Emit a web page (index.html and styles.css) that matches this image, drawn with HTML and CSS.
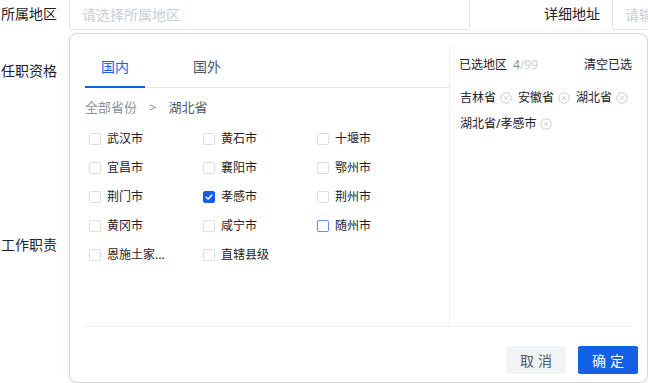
FILE: index.html
```html
<!DOCTYPE html>
<html lang="zh">
<head>
<meta charset="utf-8">
<link rel="stylesheet" href="styles.css">
</head>
<body>
<div class="page">
  <div class="form">
    <div class="row-top">
      <div class="lbl">所属地区</div>
      <div class="input wide"><span class="ph">请选择所属地区</span></div>
      <div class="lbl2">详细地址</div>
      <div class="input rest"><span class="ph">请输入详细地址</span></div>
    </div>
    <div class="lbl qual">任职资格</div>
    <div class="lbl duty">工作职责</div>
  </div>

  <div class="popup">
    <div class="pop-body">
      <div class="left">
        <div class="tabs">
          <div class="tab active">国内</div>
          <div class="tab">国外</div>
        </div>
        <div class="crumb"><span class="c-all">全部省份</span><span class="c-sep">&gt;</span><span class="c-cur">湖北省</span></div>
        <div class="grid">
          <label class="cb"><span class="box"></span><span class="txt">武汉市</span></label>
          <label class="cb"><span class="box"></span><span class="txt">黄石市</span></label>
          <label class="cb"><span class="box"></span><span class="txt">十堰市</span></label>
          <label class="cb"><span class="box"></span><span class="txt">宜昌市</span></label>
          <label class="cb"><span class="box"></span><span class="txt">襄阳市</span></label>
          <label class="cb"><span class="box"></span><span class="txt">鄂州市</span></label>
          <label class="cb"><span class="box"></span><span class="txt">荆门市</span></label>
          <label class="cb"><span class="box checked"><svg viewBox="0 0 12 12" width="12" height="12"><path d="M2.6 6.2 L5 8.5 L9.4 3.6" fill="none" stroke="#fff" stroke-width="1.8" stroke-linecap="round" stroke-linejoin="round"/></svg></span><span class="txt">孝感市</span></label>
          <label class="cb"><span class="box"></span><span class="txt">荆州市</span></label>
          <label class="cb"><span class="box"></span><span class="txt">黄冈市</span></label>
          <label class="cb"><span class="box"></span><span class="txt">咸宁市</span></label>
          <label class="cb"><span class="box hover"></span><span class="txt">随州市</span></label>
          <label class="cb"><span class="box"></span><span class="txt">恩施土家...</span></label>
          <label class="cb"><span class="box"></span><span class="txt">直辖县级</span></label>
        </div>
      </div>
      <div class="right">
        <div class="r-head">
          <div class="r-title">已选地区<span class="cnt"><span class="cnt-n">4</span>/99</span></div>
          <div class="r-clear">清空已选</div>
        </div>
        <div class="tags">
          <span class="tag">吉林省<svg class="x" viewBox="0 0 12 12" width="12" height="12"><circle cx="6" cy="6" r="5.2" fill="none" stroke="#c9cdd4" stroke-width="1"/><path d="M4.2 4.2 L7.8 7.8 M7.8 4.2 L4.2 7.8" stroke="#c9cdd4" stroke-width="1"/></svg></span>
          <span class="tag">安徽省<svg class="x" viewBox="0 0 12 12" width="12" height="12"><circle cx="6" cy="6" r="5.2" fill="none" stroke="#c9cdd4" stroke-width="1"/><path d="M4.2 4.2 L7.8 7.8 M7.8 4.2 L4.2 7.8" stroke="#c9cdd4" stroke-width="1"/></svg></span>
          <span class="tag">湖北省<svg class="x" viewBox="0 0 12 12" width="12" height="12"><circle cx="6" cy="6" r="5.2" fill="none" stroke="#c9cdd4" stroke-width="1"/><path d="M4.2 4.2 L7.8 7.8 M7.8 4.2 L4.2 7.8" stroke="#c9cdd4" stroke-width="1"/></svg></span>
          <span class="tag">湖北省/孝感市<svg class="x" viewBox="0 0 12 12" width="12" height="12"><circle cx="6" cy="6" r="5.2" fill="none" stroke="#c9cdd4" stroke-width="1"/><path d="M4.2 4.2 L7.8 7.8 M7.8 4.2 L4.2 7.8" stroke="#c9cdd4" stroke-width="1"/></svg></span>
        </div>
      </div>
    </div>
    <div class="pop-foot">
      <button class="btn cancel">取消</button>
      <button class="btn ok">确定</button>
    </div>
  </div>
</div>
</body>
</html>
```
FILE: styles.css
```css
* { box-sizing: border-box; }
html, body { margin: 0; padding: 0; }
body {
  width: 648px;
  height: 383px;
  overflow: hidden;
  background: #fff;
  font-family: "Noto Sans", "Noto Sans CJK SC", sans-serif;
  color: #1d2129;
}
.page { position: relative; width: 648px; height: 383px; overflow: hidden; }

.form { display: flex; flex-direction: column; }
.row-top { display: flex; align-items: center; margin-top: -2px; height: 32px; }
.lbl { width: 69px; flex-shrink: 0; font-size: 14px; line-height: 20px; padding-left: 1px; color: #1d2129; white-space: nowrap; }
.input {
  height: 32px;
  flex-shrink: 0;
  border: 1px solid #e3e4e8;
  border-radius: 3px;
  display: flex; align-items: center;
  padding-left: 12px;
  font-size: 14px;
  overflow: hidden;
}
.input.wide { width: 401px; }
.input.rest { width: 200px; }
.ph { color: #c9cdd4; white-space: nowrap; }
.lbl2 { width: 142px; flex-shrink: 0; text-align: right; padding-right: 12px; font-size: 14px; line-height: 20px; white-space: nowrap; }
.qual { margin-top: 31px; }
.duty { margin-top: 154px; }

.popup {
  position: absolute;
  left: 69px; top: 33px;
  width: 579px; height: 350px;
  background: #fff;
  border: 1px solid #d4d6da;
  border-radius: 8px;
  box-shadow: 0 2px 8px rgba(0,0,0,0.08);
  display: flex; flex-direction: column;
}
.pop-body {
  flex: 1;
  margin: 0 15px 0 15px;
  border-bottom: 1px solid #eceef1;
  display: flex;
}
.left { width: 364px; padding-top: 14px; }
.tabs { display: flex; height: 40px; border-bottom: 1px solid #e5e6eb; gap: 32px; }
.tab {
  width: 60px; height: 40px;
  text-align: center; font-size: 14px; line-height: 38px;
  color: #4e5969;
  border-bottom: 2px solid transparent;
  margin-bottom: -1px;
}
.tab.active { color: #165dff; border-bottom-color: #1160e6; }
.crumb { margin-top: 9px; font-size: 13px; line-height: 20px; display: flex; align-items: center; }
.c-all { color: #86909c; }
.c-sep { color: #86909c; margin: 0 12px 0 12px; }
.c-cur { color: #4e5969; }

.grid {
  margin-top: 7px;
  padding-left: 4px;
  display: grid;
  grid-template-columns: 114px 114px 114px;
  grid-auto-rows: 29px;
}
.cb { display: flex; align-items: center; font-size: 12px; color: #1d2129; min-width: 0; }
.box {
  width: 12px; height: 12px;
  border: 1px solid #dcdee2;
  border-radius: 2px;
  margin-right: 6px;
  flex-shrink: 0;
  display: flex; align-items: center; justify-content: center;
}
.box.checked { background: #1160e6; border-color: #1160e6; }
.box.hover { border-color: #5f8ff5; }
.txt { white-space: nowrap; line-height: 18px; }

.right {
  flex: 1;
  margin-top: 11px;
  border-left: 1px solid #eceef1;
  padding-left: 9px;
  padding-top: 10px;
}
.r-head { display: flex; justify-content: space-between; font-size: 12px; line-height: 20px; }
.cnt { color: #c9cdd4; margin-left: 6px; }
.cnt-n { color: #86909c; }
.tags { margin-top: 13px; display: flex; flex-wrap: wrap; column-gap: 6px; row-gap: 6px; padding-left: 1px; }
.tag { display: inline-flex; align-items: center; font-size: 12px; line-height: 20px; color: #1d2129; }
.x { margin-left: 4px; }

.pop-foot {
  height: 55px;
  display: flex; justify-content: flex-end; align-items: flex-start;
  gap: 12px;
  padding: 19px 9px 0 0;
}
.btn {
  width: 60px; height: 28px;
  border: none; border-radius: 2px;
  font-family: inherit;
  font-size: 14px;
  letter-spacing: 4px;
  text-indent: 4px;
  cursor: pointer;
}
.cancel { background: #f2f3f5; color: #4e5969; }
.ok { background: #1160e6; color: #fff; }
```
